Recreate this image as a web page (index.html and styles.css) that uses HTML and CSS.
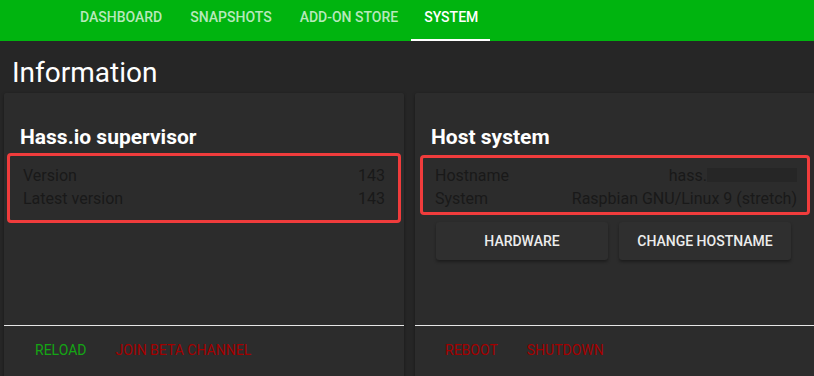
FILE: index.html
```html
<!DOCTYPE html>
<html lang="en">
<head>
  <meta charset="UTF-8">
  <title>Hass.io System</title>
  <link rel="stylesheet" href="styles.css">
</head>
<body>

  <div class="toolbar">
    <div class="tab">DASHBOARD</div>
    <div class="tab">SNAPSHOTS</div>
    <div class="tab">ADD-ON STORE</div>
    <div class="tab active">SYSTEM</div>
  </div>

  <h1 class="page-title">Information</h1>

  <div class="cards">
    <div class="card">
      <div class="card-content">
        <h2 class="card-title">Hass.io supervisor</h2>
        <div class="info-box">
          <div class="info-row"><span>Version</span><span>143</span></div>
          <div class="info-row"><span>Latest version</span><span>143</span></div>
        </div>
      </div>
      <div class="card-actions">
        <span class="action green">RELOAD</span>
        <span class="action red">JOIN BETA CHANNEL</span>
      </div>
    </div>

    <div class="card">
      <div class="card-content">
        <h2 class="card-title">Host system</h2>
        <div class="info-box host">
          <div class="info-row"><span>Hostname</span><span>hass.<span class="hidden-name"></span></span></div>
          <div class="info-row"><span>System</span><span>Raspbian GNU/Linux 9 (stretch)</span></div>
        </div>
        <div class="host-buttons">
          <button class="raised-btn">HARDWARE</button>
          <button class="raised-btn">CHANGE HOSTNAME</button>
        </div>
      </div>
      <div class="card-actions">
        <span class="action red">REBOOT</span>
        <span class="action red">SHUTDOWN</span>
      </div>
    </div>
  </div>

</body>
</html>
```

FILE: styles.css
```css
body {
  margin: 0;
  background: #262626;
  font-family: Roboto, "Liberation Sans", sans-serif;
  overflow: hidden;
}

.toolbar {
  display: flex;
  height: 41px;
  padding-left: 66px;
  background: #00b40f;
}

.tab {
  box-sizing: border-box;
  height: 41px;
  padding: 9px 14px 0;
  line-height: 16px;
  font-size: 14px;
  font-weight: 500;
  color: rgba(255, 255, 255, 0.72);
  border-bottom: 2px solid transparent;
}

.tab.active {
  padding: 9px 12px 0 13px;
  margin-left: -1px;
  color: #fff;
  border-bottom-color: #fff;
}

.page-title {
  margin: 0;
  padding: 12px 0 0 12px;
  height: 40px;
  line-height: 40px;
  font-size: 28px;
  font-weight: 400;
  color: #fff;
}

.cards {
  display: flex;
  gap: 11px;
  padding: 0 4px;
}

.card {
  flex-shrink: 0;
  width: 400px;
  height: 320px;
  background: #2c2c2c;
  border-radius: 2px;
  box-shadow: 0 1px 3px rgba(0,0,0,0.4);
}

.card-content {
  box-sizing: border-box;
  height: 232px;
  padding-top: 28px;
}

.card-title {
  margin: 0;
  padding-left: 16px;
  line-height: 32px;
  font-size: 21px;
  font-weight: 700;
  color: #fff;
}

.info-box {
  margin: 0 3px;
  padding: 8px 13px 10px;
  border: 3px solid #f03c3c;
  border-radius: 4px;
}

.info-box.host {
  margin: 2px 5px 0;
  padding: 6px 10px 2px 12px;
}

.info-row {
  display: flex;
  justify-content: space-between;
  line-height: 23px;
  font-size: 16px;
  color: #191919;
}

.hidden-name {
  display: inline-block;
  width: 90px;
  height: 14px;
  vertical-align: -1px;
  background: #262626;
}

.host-buttons {
  display: flex;
  gap: 11px;
  margin: 7px 0 0 21px;
}

.raised-btn {
  width: 172px;
  height: 38px;
  border: none;
  border-radius: 3px;
  background: #2f2f2f;
  box-shadow: 0 2px 3px rgba(0,0,0,0.35);
  font-family: Roboto, "Liberation Sans", sans-serif;
  font-size: 14px;
  font-weight: 500;
  color: #ececec;
}

.card-actions {
  display: flex;
  gap: 29px;
  padding: 14px 0 0 31px;
  border-top: 1px solid #e6e6e6;
  line-height: 20px;
  font-size: 14px;
}

.card:last-child .card-actions {
  padding-left: 30px;
}

.action.green {
  color: #14a514;
}

.action.red {
  color: #a30000;
}
```
